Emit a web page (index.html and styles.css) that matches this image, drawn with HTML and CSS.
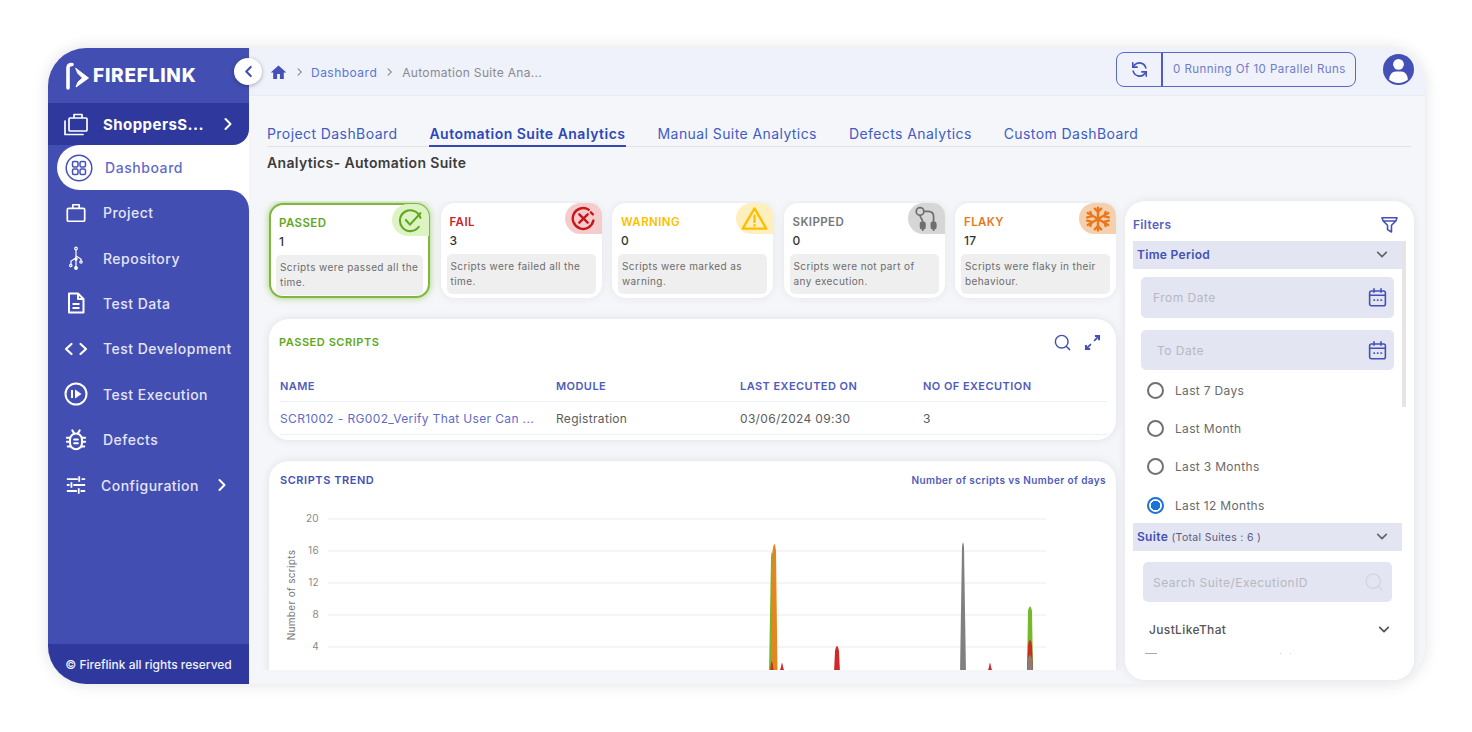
FILE: index.html
```html
<!DOCTYPE html>
<html lang="en">
	<head>
		<meta charset="UTF-8" />
		<meta name="viewport" content="width=device-width, initial-scale=1" />
		<title>Fireflink - Dashboard</title>
		<link rel="stylesheet" href="styles.css">
	</head>
	<body>
		<div class="app">
			<aside class="sidebar">
				<div class="logo">
					<svg class="logo-mark" viewBox="0 0 28 28" width="28" height="28" fill="none" stroke="#fff" stroke-linecap="round">
						<path d="M5 26V6c0-2.500 1-3.500 4-3.500" stroke-width="3.600" />
						<path d="M13 6.500l12.500 9.500-12.500 9 2-5 4.500-4-4.500-4.500z" fill="#fff" stroke-width="1" stroke-linejoin="round" />
					</svg>
					<span class="logo-text">FIREFLINK</span>
				</div>

				<div class="project-wrap">
					<div class="project-row">
						<svg class="nav-icon" viewBox="0 0 26 26" width="26" height="26" fill="none" stroke="#fff" stroke-width="1.700" stroke-linejoin="round">
							<rect x="6" y="7" width="18" height="13" rx="1" />
							<path d="M11 7V3.500h8V7" />
							<path d="M2 10v13.500h18" stroke-linecap="round" />
						</svg>
						<span class="project-name">ShoppersS...</span>
						<svg class="chevron-right" viewBox="0 0 10 14" width="10" height="14" fill="none" stroke="#fff" stroke-width="2" stroke-linecap="round" stroke-linejoin="round"><path d="M2.500 2l5 5-5 5" /></svg>
					</div>
				</div>

				<div class="active-wrap">
					<div class="nav-active">
						<svg viewBox="0 0 28 28" width="28" height="28" fill="none" stroke="#4450b5" stroke-width="1.500">
							<circle cx="14" cy="14" r="12.800" />
							<rect x="7.500" y="7.500" width="5.500" height="5.500" rx="1.500" />
							<rect x="15" y="7.500" width="5.500" height="5.500" rx="1.500" />
							<rect x="7.500" y="15" width="5.500" height="5.500" rx="1.500" />
							<rect x="15" y="15" width="5.500" height="5.500" rx="1.500" />
						</svg>
						<span>Dashboard</span>
					</div>
				</div>

				<div class="nav-rest">
					<nav class="nav-list">
						<a class="nav-item">
							<svg class="nav-icon" viewBox="0 0 24 24" width="22" height="22" fill="none" stroke="#fff" stroke-width="1.900" stroke-linejoin="round">
								<rect x="2.500" y="7" width="19" height="14" rx="1.500" />
								<path d="M8.500 7V3h7v4" />
							</svg>
							<span>Project</span>
						</a>
						<a class="nav-item">
							<svg class="nav-icon" viewBox="0 0 24 24" width="22" height="24" fill="none" stroke="#fff" stroke-width="1.200">
								<circle cx="12" cy="2.500" r="1.300" />
								<path d="M12 4v17" />
								<path d="M12 12l-5 3v3.500M12 10l5 3v2" />
								<circle cx="6.800" cy="19.500" r="1.200" />
								<circle cx="17" cy="16" r="1.200" />
								<circle cx="12" cy="22" r="1.300" fill="#fff" />
								<circle cx="12" cy="13" r="1.100" fill="#fff" />
							</svg>
							<span>Repository</span>
						</a>
						<a class="nav-item">
							<svg class="nav-icon" viewBox="0 0 24 24" width="24" height="24" fill="none" stroke="#fff" stroke-width="2" stroke-linejoin="round">
								<path d="M5 2.500h9l5.500 5.500v13.500H5z" />
								<path d="M14 2.500V8h5.500" />
								<path d="M8.500 13h7M8.500 17h7" />
							</svg>
							<span>Test Data</span>
						</a>
						<a class="nav-item">
							<svg class="nav-icon" viewBox="0 0 24 24" width="24" height="24" fill="none" stroke="#fff" stroke-width="2.200" stroke-linecap="round" stroke-linejoin="round">
								<path d="M7.500 7L2 12l5.500 5M16.500 7l5.500 5-5.500 5" />
							</svg>
							<span>Test Development</span>
						</a>
						<a class="nav-item">
							<svg class="nav-icon" viewBox="0 0 24 24" width="24" height="24" fill="none" stroke="#fff" stroke-width="2">
								<circle cx="12" cy="12" r="10.500" />
								<path d="M8 8v8" />
								<path d="M11 7.500l6.500 4.500-6.500 4.500z" fill="#fff" stroke="none" />
							</svg>
							<span>Test Execution</span>
						</a>
						<a class="nav-item">
							<svg class="nav-icon" viewBox="0 0 24 24" width="22" height="22" fill="none" stroke="#fff" stroke-width="2.200" stroke-linecap="round">
								<rect x="5.500" y="5" width="13" height="17" rx="6.500" />
								<path d="M8 1.500l2 3.500M16 1.500l-2 3.500M2 9.500h3.500M18.500 9.500H22M2 14h3.500M18.500 14H22M3 19h3M18 19h3" />
								<path d="M10 11.500h4M10 15.500h4" />
							</svg>
							<span>Defects</span>
						</a>
						<a class="nav-item nav-config">
							<svg class="nav-icon" viewBox="0 0 24 24" width="22" height="22" fill="none" stroke="#fff" stroke-width="2">
								<path d="M2 5.500h12M18 5.500h4M15.500 2.500v6M2 12h3M9 12h13M7 9v6M2 18.500h11M17 18.500h5M15 15.500v6" />
							</svg>
							<span>Configuration</span>
							<svg class="chevron-right" viewBox="0 0 10 14" width="10" height="14" fill="none" stroke="#fff" stroke-width="2" stroke-linecap="round" stroke-linejoin="round"><path d="M2.500 2l5 5-5 5" /></svg>
						</a>
					</nav>
					<div class="sidebar-footer">© Fireflink all rights reserved</div>
				</div>
			</aside>

			<button class="collapse-btn" aria-label="Collapse sidebar">
				<svg viewBox="0 0 10 14" width="9" height="13" fill="none" stroke="#4450b5" stroke-width="2.400" stroke-linecap="round" stroke-linejoin="round"><path d="M7.500 2l-5 5 5 5" /></svg>
			</button>

			<div class="main">
				<header class="topbar">
					<div class="breadcrumb">
						<svg viewBox="0 0 24 24" width="17" height="17" fill="#4450b5"><path d="M10 21v-7h4v7h5.500v-9H23L12 2 1 12h3.500v9z" /></svg>
						<svg class="crumb-sep" viewBox="0 0 10 14" width="7" height="10" fill="none" stroke="#777" stroke-width="1.500"><path d="M2.500 2l5 5-5 5" /></svg>
						<a class="crumb-link">Dashboard</a>
						<svg class="crumb-sep" viewBox="0 0 10 14" width="7" height="10" fill="none" stroke="#777" stroke-width="1.500"><path d="M2.500 2l5 5-5 5" /></svg>
						<span class="crumb-current">Automation Suite Ana...</span>
					</div>
					<div class="runs-box">
						<div class="runs-refresh">
							<svg viewBox="0 0 24 24" width="19" height="19" fill="none" stroke="#4450b5" stroke-width="2" stroke-linecap="round" stroke-linejoin="round">
								<path d="M20 10A8.500 8.500 0 0 0 5.500 6.500L3.500 9" />
								<path d="M3.500 3.500V9H9" />
								<path d="M4 14a8.500 8.500 0 0 0 14.500 3.500l2-2.500" />
								<path d="M20.500 20.500V15H15" />
							</svg>
						</div>
						<div class="runs-text">0 Running Of 10 Parallel Runs</div>
					</div>
					<svg class="avatar" viewBox="0 0 30 30" width="31" height="31">
						<defs><clipPath id="avatar-clip"><circle cx="15" cy="15" r="15" /></clipPath></defs>
						<circle cx="15" cy="15" r="15" fill="#4450b5" />
						<g clip-path="url(#avatar-clip)" fill="#fff">
							<circle cx="15" cy="10" r="5.200" />
							<path d="M6 25c0-5 3-8 6.500-8h5c3.500 0 6.500 3 6.500 8-2.500 2-5.500 3-9 3s-6.500-1-9-3z" />
						</g>
					</svg>
				</header>

				<div class="content">
					<div class="tabs">
						<a class="tab">Project DashBoard</a>
						<a class="tab tab-active">Automation Suite Analytics</a>
						<a class="tab">Manual Suite Analytics</a>
						<a class="tab">Defects Analytics</a>
						<a class="tab">Custom DashBoard</a>
					</div>
					<h1 class="page-title">Analytics- Automation Suite</h1>

					<div class="dashboard">
						<div class="left-col">
							<div class="stat-row">
								<div class="stat-card stat-passed">
									<div class="stat-icon icon-passed">
										<svg viewBox="0 0 24 24" width="25" height="25" fill="none" stroke="#5fa81e" stroke-width="2" stroke-linecap="round" stroke-linejoin="round">
											<path d="M21.500 9.500A10 10 0 1 0 20 18" />
											<path d="M7.500 11.500l4 4.500 10-11" />
										</svg>
									</div>
									<div class="stat-label">PASSED</div>
									<div class="stat-count">1</div>
									<div class="stat-desc">Scripts were passed all the time.</div>
								</div>
								<div class="stat-card stat-fail">
									<div class="stat-icon icon-fail">
										<svg viewBox="0 0 24 24" width="25" height="25" fill="none" stroke="#c8161d" stroke-width="2.300" stroke-linecap="round">
											<path d="M21.500 14A10 10 0 1 1 17 3.500" />
											<path d="M8 8l8 8M16 8l-8 8" />
											<path d="M19 6l2 2" />
										</svg>
									</div>
									<div class="stat-label">FAIL</div>
									<div class="stat-count">3</div>
									<div class="stat-desc">Scripts were failed all the time.</div>
								</div>
								<div class="stat-card stat-warning">
									<div class="stat-icon icon-warning">
										<svg viewBox="0 0 24 24" width="27" height="27" fill="none" stroke="#fcbf00" stroke-width="2.100" stroke-linejoin="round" stroke-linecap="round">
											<path d="M12 3L1.500 21h21z" />
											<path d="M12 9.500v5.500M12 18v.2" />
										</svg>
									</div>
									<div class="stat-label">WARNING</div>
									<div class="stat-count">0</div>
									<div class="stat-desc">Scripts were marked as warning.</div>
								</div>
								<div class="stat-card stat-skipped">
									<div class="stat-icon icon-skipped">
										<svg viewBox="0 0 24 24" width="26" height="26" fill="none" stroke="#6f6f6f" stroke-width="1.600">
											<circle cx="6.500" cy="5" r="3.500" />
											<path d="M10 5h4c3.500 0 5 2 5 5v5M6.500 8.500c0 3 2.500 3 2.500 6.500" />
											<path d="M9 20v3M19 20v3" />
											<rect x="7" y="15" width="4" height="6" rx="1.500" fill="#6f6f6f" />
											<rect x="17" y="15" width="4" height="6" rx="1.500" fill="#6f6f6f" />
										</svg>
									</div>
									<div class="stat-label">SKIPPED</div>
									<div class="stat-count">0</div>
									<div class="stat-desc">Scripts were not part of any execution.</div>
								</div>
								<div class="stat-card stat-flaky">
									<div class="stat-icon icon-flaky">
										<svg viewBox="0 0 24 24" width="26" height="26" fill="none" stroke="#e8781e" stroke-width="2.200" stroke-linecap="round" stroke-linejoin="round">
											<path d="M12 1.500v21M2.500 6.500l19 11M21.500 6.500l-19 11" />
											<path d="M9 2.500l3 3 3-3M9 21.500l3-3 3 3M2 10.500l4-1-1-4M22 10.500l-4-1 1-4M2 13.500l4 1-1 4M22 13.500l-4 1 1 4" />
										</svg>
									</div>
									<div class="stat-label">FLAKY</div>
									<div class="stat-count">17</div>
									<div class="stat-desc">Scripts were flaky in their behaviour.</div>
								</div>
							</div>

							<section class="panel scripts-panel">
								<div class="panel-head">
									<span class="panel-title title-green">PASSED SCRIPTS</span>
									<div class="panel-tools">
										<svg viewBox="0 0 24 24" width="19" height="19" fill="none" stroke="#4450b5" stroke-width="1.800" stroke-linecap="round"><circle cx="11" cy="11" r="8" /><path d="M17 17l4 4" /></svg>
										<svg viewBox="0 0 24 24" width="19" height="19" fill="none" stroke="#4450b5" stroke-width="2.200"><path d="M14 10l7-7M3 21l7-7" /><path d="M15 2.500h6.500V9H19V5h-4zM2.500 15H5v4h4v2.500H2.500z" fill="#4450b5" stroke="none" /></svg>
									</div>
								</div>
								<div class="table-row table-head">
									<span>NAME</span>
									<span>MODULE</span>
									<span>LAST EXECUTED ON</span>
									<span>NO OF EXECUTION</span>
								</div>
								<div class="table-row table-body">
									<a class="script-link">SCR1002 - RG002_Verify That User Can ...</a>
									<span>Registration</span>
									<span>03/06/2024 09:30</span>
									<span>3</span>
								</div>
							</section>

							<section class="panel trend-panel">
								<div class="panel-head trend-head">
									<span class="panel-title title-blue">SCRIPTS TREND</span>
									<span class="trend-note">Number of scripts vs Number of days</span>
								</div>
								<svg class="trend-chart" viewBox="0 0 847 200" width="847" height="200">
									<g stroke="#ececec" stroke-width="1.200">
										<line x1="59" y1="38" x2="777" y2="38" />
										<line x1="59" y1="70" x2="777" y2="70" />
										<line x1="59" y1="102" x2="777" y2="102" />
										<line x1="59" y1="134" x2="777" y2="134" />
										<line x1="59" y1="166" x2="777" y2="166" />
									</g>
									<g class="tick" text-anchor="end">
										<text x="50" y="41">20</text>
										<text x="50" y="73">16</text>
										<text x="50" y="105">12</text>
										<text x="50" y="137">8</text>
										<text x="50" y="169">4</text>
									</g>
									<text class="axis-title" transform="translate(26 114) rotate(-90)" text-anchor="middle">Number of scripts</text>
									<path d="M500 192L502 76Q503 66 504.500 76L506 192z" fill="#77b82a" />
									<path d="M502 192L503.500 70Q505.500 56 507 70L508.500 192z" fill="#e5851f" />
									<path d="M501 192L502 182Q503 176 505 192z" fill="#c9301e" />
									<path d="M510 192L512 186Q513 178 514 186L516 192z" fill="#cc2b2b" />
									<path d="M565 192L566 170Q568 160 570 170L571 192z" fill="#cc2b2b" />
									<path d="M691 192L693 66Q694 57 695 66L697 192z" fill="#808080" />
									<path d="M718 192L720 186Q721 178 722 186L724 192z" fill="#cc2b2b" />
									<path d="M758 192L759 130Q761 121 763 130L764 192z" fill="#77b82a" />
									<path d="M758 192L759 164Q761 154 763 164L764 192z" fill="#c52f1c" />
									<path d="M758 192L759 178Q761 170 763 178L764 192z" fill="#8d7b78" />
								</svg>
							</section>
						</div>

						<aside class="filters">
							<div class="filters-head">
								<span>Filters</span>
								<svg viewBox="0 0 24 24" width="19" height="19" fill="none" stroke="#4450b5" stroke-width="2" stroke-linejoin="round"><path d="M2.500 3.500h19l-1.500 4-5.500 5.500v8.500l-5-3v-5.500L4 7.500zM4 7.500h16" /></svg>
							</div>
							<div class="filter-band">
								<span class="band-title">Time Period</span>
								<svg class="chevron-down" viewBox="0 0 14 10" width="12" height="9" fill="none" stroke="#666" stroke-width="2" stroke-linecap="round" stroke-linejoin="round"><path d="M2 2.500l5 5 5-5" /></svg>
							</div>
							<div class="date-field">
								<input class="field-input" placeholder="From Date" />
								<svg viewBox="0 0 24 24" width="21" height="21" fill="none" stroke="#4450b5" stroke-width="1.800" stroke-linecap="round"><rect x="3" y="4.500" width="18" height="17" rx="2" /><path d="M3 9.500h18M8 2v4M16 2v4M8 15h.5M12 15h.5M16 15h.5" /></svg>
							</div>
							<div class="date-field date-to">
								<input class="field-input" placeholder="To Date" />
								<svg viewBox="0 0 24 24" width="21" height="21" fill="none" stroke="#4450b5" stroke-width="1.800" stroke-linecap="round"><rect x="3" y="4.500" width="18" height="17" rx="2" /><path d="M3 9.500h18M8 2v4M16 2v4M8 15h.5M12 15h.5M16 15h.5" /></svg>
							</div>
							<div class="radio-list">
								<label class="radio-row"><span class="radio"></span>Last 7 Days</label>
								<label class="radio-row"><span class="radio"></span>Last Month</label>
								<label class="radio-row"><span class="radio"></span>Last 3 Months</label>
								<label class="radio-row"><span class="radio radio-on"></span>Last 12 Months</label>
							</div>
							<div class="filter-band suite-band">
								<span class="band-title">Suite <span class="band-sub">(Total Suites : 6 )</span></span>
								<svg class="chevron-down" viewBox="0 0 14 10" width="12" height="9" fill="none" stroke="#666" stroke-width="2" stroke-linecap="round" stroke-linejoin="round"><path d="M2 2.500l5 5 5-5" /></svg>
							</div>
							<div class="search-field">
								<input class="field-input" placeholder="Search Suite/ExecutionID" />
								<svg viewBox="0 0 24 24" width="20" height="20" fill="none" stroke="#d4d5da" stroke-width="1.600" stroke-linecap="round"><circle cx="11" cy="11" r="8.500" /><path d="M17.500 17.500l4 4" /></svg>
							</div>
							<div class="suite-row">
								<span>JustLikeThat</span>
								<svg viewBox="0 0 14 10" width="12" height="9" fill="none" stroke="#555" stroke-width="2" stroke-linecap="round" stroke-linejoin="round"><path d="M2 2.500l5 5 5-5" /></svg>
							</div>
							<div class="cut-row"><i class="cut-dash"></i><i class="cut-dot"></i><i class="cut-dot"></i></div>
							<div class="filter-scroll"></div>
						</aside>
					</div>
				</div>
			</div>
		</div>
	</body>
</html>
```

FILE: styles.css
```css
* {
	box-sizing: border-box;
}

body {
	margin: 0;
	padding: 48px 47px 48px 48px;
	height: 732px;
	overflow: hidden;
	background: #fff;
	font-family: "Inter", "Open Sans", sans-serif;
	letter-spacing: 0.02em;
	color: #444;
}

.app {
	position: relative;
	display: flex;
	width: 1377px;
	height: 636px;
	border-radius: 38px;
	overflow: hidden;
	background: #f5f6f9;
	box-shadow: 0 0 16px rgba(0, 0, 0, 0.12);
}

/* sidebar */
.sidebar {
	flex: 0 0 201px;
	display: flex;
	flex-direction: column;
	background: #434eb3;
}

.logo {
	height: 55px;
	display: flex;
	align-items: center;
	padding-left: 15px;
	gap: 2px;
}

.logo-text {
	font-size: 19px;
	font-weight: 800;
	letter-spacing: 0.04em;
	color: #fff;
}

.project-wrap {
	background: #fff;
}

.project-row {
	height: 42px;
	display: flex;
	align-items: center;
	padding-left: 15px;
	background: #2f399d;
	border-bottom-right-radius: 16px;
	color: #fff;
}

.project-name {
	margin-left: 14px;
	width: 120px;
	font-size: 15px;
	font-weight: 700;
	letter-spacing: 0.03em;
}

.active-wrap {
	background: #434eb3;
}

.nav-active {
	height: 45px;
	margin-left: 9px;
	display: flex;
	align-items: center;
	padding-left: 8px;
	gap: 12px;
	background: #fff;
	border-radius: 23px 0 0 23px;
	font-size: 14px;
	font-weight: 500;
	letter-spacing: 0.04em;
	color: #5f6bc8;
}

.nav-rest {
	flex: 1;
	display: flex;
	flex-direction: column;
	background: #fff;
}

.nav-list {
	flex: 1;
	padding-top: 0;
	background: #434eb3;
	border-top-right-radius: 20px;
}

.nav-item {
	height: 45.4px;
	display: flex;
	align-items: center;
	padding-left: 16px;
	font-size: 14px;
	font-weight: 500;
	letter-spacing: 0.035em;
	color: #e3e5f7;
}

.nav-item .nav-icon {
	flex: 0 0 24px;
	margin-right: 15px;
}

.nav-config span {
	width: 116px;
	margin-left: -2px;
}

.sidebar-footer {
	height: 40px;
	display: flex;
	align-items: center;
	justify-content: center;
	background: #2f399d;
	font-size: 12px;
	font-weight: 500;
	letter-spacing: 0;
	color: #f0f1fb;
}

.collapse-btn {
	position: absolute;
	left: 186px;
	top: 10px;
	width: 28px;
	height: 27px;
	padding: 0;
	display: flex;
	align-items: center;
	justify-content: center;
	background: #fff;
	border: 0;
	border-radius: 50%;
	box-shadow: 0 1px 4px rgba(0, 0, 0, 0.3);
}

/* top bar */
.main {
	flex: 1;
	min-width: 0;
	display: flex;
	flex-direction: column;
}

.topbar {
	height: 48px;
	flex: 0 0 48px;
	display: flex;
	align-items: center;
	padding: 0 11px 0 21px;
	background: #eff1fb;
	border-bottom: 1px solid #eaebf3;
}

.breadcrumb {
	flex: 1;
	display: flex;
	align-items: center;
	margin-top: 1px;
	font-size: 12px;
}

.crumb-sep {
	margin: 0 9px 0 9px;
}

.crumb-link {
	margin-left: -1px;
	letter-spacing: 0.04em;
	color: #5a76d3;
}

.crumb-current {
	color: #8a8a8e;
}

.runs-box {
	display: flex;
	align-items: stretch;
	width: 240px;
	height: 35px;
	margin-top: -5px;
	margin-right: 27px;
	border: 1.5px solid #5a68c8;
	border-radius: 8px;
}

.runs-refresh {
	flex: 0 0 46px;
	display: flex;
	align-items: center;
	justify-content: center;
	border-right: 2px solid #4f5cbd;
}

.runs-text {
	flex: 1;
	display: flex;
	align-items: center;
	padding-left: 10px;
	font-size: 11.500px;
	letter-spacing: 0.04em;
	color: #6f7cc9;
}

.avatar {
	margin-top: -5px;
}

/* tabs */
.content {
	flex: 1;
	min-height: 0;
	padding: 28px 14px 0 18px;
	overflow: hidden;
}

.tabs {
	display: flex;
	gap: 32px;
	height: 23px;
	border-bottom: 1.5px solid #e2e3e8;
}

.tab {
	height: 23px;
	font-size: 14px;
	line-height: 20px;
	letter-spacing: 0.03em;
	color: #3f5cc4;
}

.tab-active {
	font-weight: 600;
	letter-spacing: 0.035em;
	color: #2d47bb;
	border-bottom: 2px solid #3547b8;
}

.page-title {
	margin: 7px 0 0;
	height: 20px;
	font-size: 14px;
	line-height: 17px;
	font-weight: 600;
	letter-spacing: 0.025em;
	color: #3c3c3c;
}

/* dashboard */
.dashboard {
	display: flex;
	margin: 0 -3px 0 -8px;
	height: 479px;
	margin-top: 27px;
}

.left-col {
	flex: 0 0 867px;
	height: 469px;
	padding: 2px 10px 0;
	margin-right: 0;
	overflow: hidden;
}

.stat-row {
	display: flex;
	justify-content: space-between;
}

.stat-card {
	position: relative;
	width: 161px;
	height: 95px;
	padding: 13px 6px 0;
	background: #fff;
	border-radius: 14px;
	box-shadow: 0 0 10px rgba(0, 0, 0, 0.07);
}

.stat-passed {
	padding: 12px 5px 0;
	border: 2px solid #7fb83c;
	box-shadow: 0 0 7px rgba(110, 180, 40, 0.6);
}

.stat-icon {
	position: absolute;
	top: 0;
	right: 0;
	width: 37px;
	height: 31px;
	display: flex;
	align-items: center;
	justify-content: center;
	border-radius: 16px 13px 0 16px;
}

.stat-passed .stat-icon {
	top: -1px;
	right: -1px;
	height: 32px;
}

.icon-passed {
	background: #def3c4;
}

.icon-fail {
	background: #f5cccc;
}

.icon-warning {
	background: #fdefbe;
}

.icon-skipped {
	background: #d6d6d6;
}

.icon-flaky {
	background: #f4d0ae;
}

.stat-label {
	padding-left: 3px;
	font-size: 11.500px;
	line-height: 13px;
	font-weight: 600;
	letter-spacing: 0.035em;
}

.stat-passed .stat-label {
	color: #5fa81e;
}

.stat-fail .stat-label {
	color: #c8262d;
}

.stat-warning .stat-label {
	color: #fcbf00;
}

.stat-skipped .stat-label {
	color: #777;
}

.stat-flaky .stat-label {
	color: #e8781e;
}

.stat-count {
	margin-top: 4px;
	padding-left: 3px;
	font-size: 12px;
	line-height: 15px;
	font-weight: 500;
	color: #333;
}

.stat-desc {
	height: 40px;
	margin-top: 6px;
	padding: 5px 3px 0 4px;
	background: #efefef;
	border-radius: 5px;
	font-size: 10px;
	line-height: 15px;
	letter-spacing: 0.04em;
	color: #6c6c6c;
}

.panel {
	background: #fff;
	border-radius: 20px;
	box-shadow: 0 0 10px rgba(0, 0, 0, 0.09);
}

.scripts-panel {
	height: 121px;
	margin-top: 21px;
	padding: 0 9px 0 11px;
}

.panel-head {
	display: flex;
	align-items: center;
	justify-content: space-between;
}

.scripts-panel .panel-head {
	height: 47px;
}

.panel-title {
	font-size: 11px;
	font-weight: 600;
	letter-spacing: 0.05em;
}

.title-green {
	margin-top: -2px;
	margin-left: -1px;
	color: #5fa81e;
}

.title-blue {
	color: #4450b5;
}

.panel-tools {
	display: flex;
	gap: 11px;
	margin: 0 5px 0 0;
}

.table-row {
	display: grid;
	grid-template-columns: 276px 184px 183px 1fr;
	align-items: center;
	font-size: 12px;
	color: #5c5c5c;
}

.table-head {
	height: 36px;
	padding-top: 4px;
	border-bottom: 1px solid #eceef8;
	font-size: 11px;
	font-weight: 600;
	letter-spacing: 0.04em;
	color: #4f5bbb;
}

.table-body {
	height: 33px;
	border-bottom: 1px solid #eceef8;
}

.script-link {
	color: #5f6bc8;
	letter-spacing: 0.03em;
	white-space: nowrap;
}

.trend-panel {
	height: 240px;
	margin-top: 21px;
	overflow: hidden;
}

.trend-head {
	height: 38px;
	padding: 0 10px 0 11px;
}

.trend-note {
	font-size: 10px;
	font-weight: 600;
	letter-spacing: 0.04em;
	color: #4f5bbb;
}

.trend-chart {
	display: block;
	margin-top: -18px;
}

.tick {
	font-size: 10px;
	fill: #8a8a8a;
}

.axis-title {
	font-size: 10px;
	fill: #777;
}

/* filter panel */
.filters {
	position: relative;
	flex: 0 0 289px;
	margin-left: -1px;
	padding: 14px 0 0 8px;
	background: #fff;
	border-radius: 20px;
	box-shadow: 0 0 10px rgba(0, 0, 0, 0.08);
	overflow: hidden;
}

.filters-head {
	height: 26px;
	display: flex;
	align-items: center;
	justify-content: space-between;
	padding: 0 15px 8px 0;
	font-size: 12px;
	font-weight: 600;
	color: #5562c2;
}

.filter-band {
	width: 269px;
	height: 28px;
	display: flex;
	align-items: center;
	justify-content: space-between;
	padding: 0 14px 2px 4px;
	background: #e3e5f3;
}

.band-title {
	font-size: 12px;
	font-weight: 600;
	color: #4450b5;
}

.band-sub {
	font-size: 10.500px;
	font-weight: 400;
	color: #5b5b80;
}

.date-field,
.search-field {
	display: flex;
	align-items: center;
	justify-content: space-between;
	background: #e3e5f3;
	border-radius: 5px;
}

.date-field {
	width: 253px;
	height: 41px;
	margin: 8px 0 0 8px;
	padding: 0 6px 0 12px;
}

.date-to {
	height: 40px;
	margin-top: 12px;
	padding-left: 16px;
}

.field-input {
	flex: 1;
	min-width: 0;
	padding: 0;
	background: transparent;
	border: 0;
	outline: 0;
	font-family: inherit;
	font-size: 12px;
	letter-spacing: 0.04em;
}

.field-input::placeholder {
	color: #b7b8c0;
	opacity: 1;
}

.radio-list {
	margin-top: 1px;
	margin-bottom: -1px;
}

.radio-row {
	height: 38.3px;
	display: flex;
	align-items: center;
	gap: 11px;
	padding-left: 14px;
	font-size: 12px;
	color: #6a6a6a;
}

.radio {
	width: 17px;
	height: 17px;
	border: 2px solid #707070;
	border-radius: 50%;
}

.radio-on {
	border-color: #1a73d8;
	background: radial-gradient(circle, #1a73d8 0 4.500px, #fff 5px);
}

.search-field {
	width: 249px;
	height: 40px;
	margin: 11px 0 0 10px;
	padding: 0 8px 0 10px;
}

.suite-row {
	width: 241px;
	height: 34px;
	margin: 10px 0 0 16px;
	display: flex;
	align-items: center;
	justify-content: space-between;
	font-size: 12px;
	font-weight: 500;
	letter-spacing: 0.03em;
	color: #555;
}

.cut-row {
	display: flex;
	align-items: flex-start;
	height: 1px;
	margin: 7px 0 0 12px;
}

.cut-dash {
	width: 12px;
	height: 1px;
	background: #aaa;
}

.cut-dot {
	width: 1px;
	height: 1px;
	margin-left: 9px;
	background: #ccc;
}

.cut-dash + .cut-dot {
	margin-left: 123px;
}

.filter-scroll {
	position: absolute;
	top: 40px;
	left: 277px;
	width: 4px;
	height: 166px;
	background: #e5e5e5;
}
```
